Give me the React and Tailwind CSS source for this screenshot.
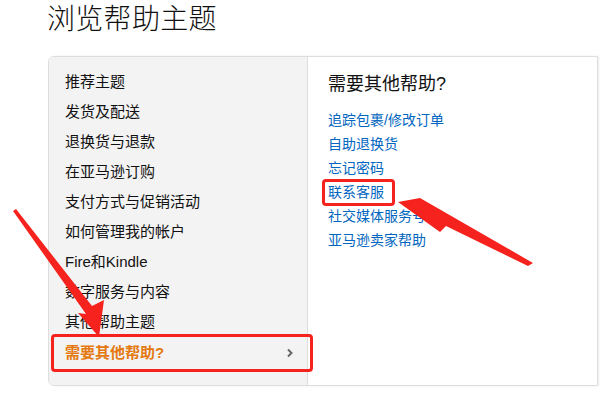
const topics = [
  "推荐主题",
  "发货及配送",
  "退换货与退款",
  "在亚马逊订购",
  "支付方式与促销活动",
  "如何管理我的帐户",
  "Fire和Kindle",
  "数字服务与内容",
  "其他帮助主题",
]

const links = [
  "追踪包裹/修改订单",
  "自助退换货",
  "忘记密码",
  "联系客服",
  "社交媒体服务号",
  "亚马逊卖家帮助",
]

export default function App() {
  return (
    <div
      className="relative h-[400px] w-[600px] overflow-hidden bg-white text-[#111]"
      style={{ fontFamily: '"Liberation Sans", "Noto Sans CJK SC", sans-serif' }}
    >
      <h1 className="pl-[47px] pt-[3px] text-[28px] font-light leading-[34px] tracking-[0.3px]">浏览帮助主题</h1>

      <div className="ml-[48px] mt-[19px] flex h-[330px] w-[550px] overflow-hidden rounded-l-md border border-[#ddd] shadow-[1px_0_2px_rgba(0,0,0,0.08)]">
        <div className="flex w-[259px] flex-col border-r border-[#ddd] bg-[#f3f3f3] pt-[14px]">
          {topics.map((t) => (
            <div key={t} className="h-[30px] pl-[16px] text-[15px] leading-[22px]">
              {t}
            </div>
          ))}
          <div className="relative ml-[2px] mr-[-6px] mt-[-7px] flex h-[38px] items-center justify-between rounded-sm border-[3px] border-[#f5221d] pl-[11px] pr-[16px]">
            <span className="text-[15px] font-bold text-[#e47911]">需要其他帮助?</span>
            <svg width="8" height="10" viewBox="0 0 8 10">
              <path d="M2 1.5 L5.5 5 L2 8.5" fill="none" stroke="#666" strokeWidth="2" />
            </svg>
          </div>
        </div>

        <div className="flex flex-1 flex-col pl-[20px] pt-[14px]">
          <h2 className="text-[18px] leading-[26px]">需要其他帮助?</h2>
          <div className="mt-[11px] flex flex-col">
            {links.map((l) =>
              l === "联系客服" ? (
                <span key={l} className="-ml-[6px] mr-auto mb-[-2px] mt-[-1px] h-[27px] rounded-sm border-[3px] border-[#f5221d] pl-[3px] pr-[8px] text-[14px] leading-[20px] text-[#0066c0]">
                  {l}
                </span>
              ) : (
                <span key={l} className="h-[24px] text-[14px] leading-[24px] text-[#0066c0]">
                  {l}
                </span>
              )
            )}
          </div>
        </div>
      </div>

      <svg className="pointer-events-none absolute left-0 top-0" width="600" height="400">
        <polygon points="13,211 16,209 92,306 104,300 99,337 78,313 86,314" fill="#f5221d" />
        <polygon points="398,202 420,198 533,263 528,266 446,226 440,232" fill="#f5221d" />
      </svg>
    </div>
  )
}
